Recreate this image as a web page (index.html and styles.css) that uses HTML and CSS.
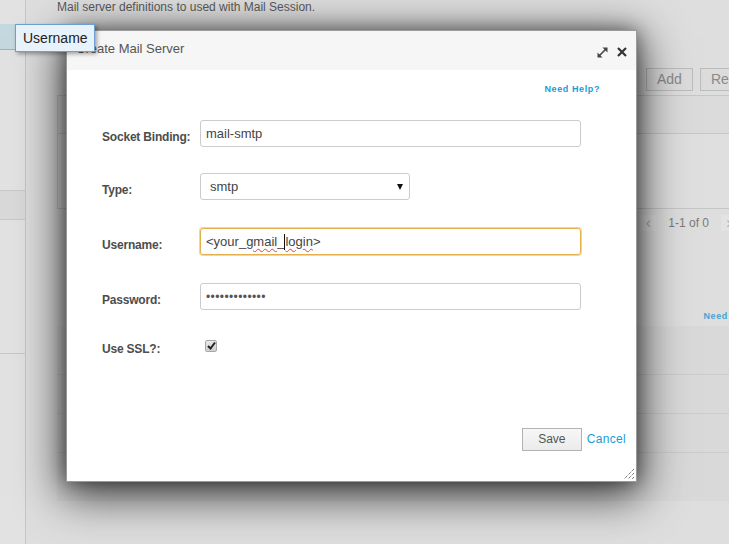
FILE: index.html
```html
<!DOCTYPE html>
<html>
<head>
<meta charset="utf-8">
<title>Create Mail Server</title>
<link rel="stylesheet" href="styles.css">
</head>
<body>
<div class="page">
  <aside class="nav">
    <div class="nav-top"></div>
    <div class="nav-item active"></div>
    <div class="nav-space1"></div>
    <div class="nav-band"></div>
    <div class="nav-space2"></div>
    <div class="nav-rest"></div>
  </aside>
  <main class="main">
    <p class="desc">Mail server definitions to used with Mail Session.</p>
    <div class="toolbar">
      <span class="bg-btn">Add</span>
      <span class="bg-btn">Remove</span>
    </div>
    <div class="table">
      <div class="thead"></div>
      <div class="tbody"></div>
    </div>
    <div class="pager">
      <span class="pg-btn">&#8249;</span>
      <span class="pg-text">1-1 of 0</span>
      <span class="pg-btn">&#8250;</span>
    </div>
    <div class="bg-help-row"><span class="bg-help">Need Help?</span></div>
    <div class="detail">
      <div class="drow first"></div>
      <div class="drow"></div>
      <div class="drow"></div>
      <div class="drow last"></div>
    </div>
  </main>
</div>

<div class="dialog">
  <div class="dlg-head">
    <span class="dlg-title">Create Mail Server</span>
    <span class="dlg-icons">
      <svg class="ico" width="11" height="11" viewBox="0 0 11 11">
        <line x1="2.5" y1="8.5" x2="8.5" y2="2.5" stroke="#444" stroke-width="1.6"/>
        <polygon points="5.5,0.5 10.5,0.5 10.5,5.5" fill="#444"/>
        <polygon points="0.5,5.5 0.5,10.5 5.5,10.5" fill="#444"/>
      </svg>
      <svg class="ico close" width="10" height="10" viewBox="0 0 10 10">
        <path d="M1 1 L9 9 M9 1 L1 9" stroke="#333" stroke-width="2.2" fill="none"/>
      </svg>
    </span>
  </div>
  <div class="dlg-body">
    <div class="help-row"><a class="help">Need Help?</a></div>
    <div class="form">
      <div class="row r1">
        <label class="lbl">Socket Binding:</label>
        <div class="field">mail-smtp</div>
      </div>
      <div class="row r2">
        <label class="lbl">Type:</label>
        <div class="field select"><span>smtp</span><span class="arrow"></span></div>
      </div>
      <div class="row r3">
        <label class="lbl">Username:</label>
        <div class="field focus">&lt;your_<span class="spell">gmail</span>_<span class="caret"></span><span class="spell">login</span>&gt;</div>
      </div>
      <div class="row r4">
        <label class="lbl">Password:</label>
        <div class="field pw">&#8226;&#8226;&#8226;&#8226;&#8226;&#8226;&#8226;&#8226;&#8226;&#8226;&#8226;&#8226;&#8226;</div>
      </div>
      <div class="row r5">
        <label class="lbl">Use SSL?:</label>
        <span class="check">
          <svg width="9" height="9" viewBox="0 0 9 9"><path d="M1 5 L3.5 7.5 L8 1.5" stroke="#222" stroke-width="2" fill="none"/></svg>
        </span>
      </div>
    </div>
    <div class="footer">
      <span class="save">Save</span>
      <a class="cancel">Cancel</a>
    </div>
  </div>
  <svg class="grip" width="12" height="12" viewBox="0 0 12 12">
    <path d="M11 1 L1 11 M11 5 L5 11 M11 9 L9 11" stroke="#444" stroke-width="1" stroke-dasharray="1 1" fill="none"/>
  </svg>
</div>

<div class="tooltip">Username</div>
</body>
</html>
```
FILE: styles.css
```css
html, body {
  margin: 0;
  padding: 0;
}
body {
  width: 729px;
  height: 544px;
  overflow: hidden;
  background: #dedede;
  font-family: "Liberation Sans", Arial, sans-serif;
  position: relative;
}
.page {
  display: flex;
  height: 544px;
}
.nav {
  width: 25px;
  flex: none;
  border-right: 1px solid #c6c6c6;
  background: #e2e2e2;
  display: flex;
  flex-direction: column;
}
.nav-top { height: 24px; }
.nav-item.active {
  height: 25px;
  background: #c4d8df;
  border-bottom: 1px solid #8fb7cf;
}
.nav-space1 {
  height: 140px;
  border-bottom: 1px solid #c8c8c8;
}
.nav-band {
  height: 28px;
  background: #d9d9d9;
  border-bottom: 1px solid #c8c8c8;
}
.nav-space2 {
  height: 133px;
  border-bottom: 1px solid #c8c8c8;
}
.nav-rest { flex: 1; }

.main {
  flex: 1;
  padding-left: 31px;
  display: flex;
  flex-direction: column;
  min-width: 0;
}
.desc {
  margin: 0;
  font-size: 12px;
  line-height: 14px;
  color: #5a5a5a;
  white-space: nowrap;
}
.toolbar {
  margin-top: 54px;
  height: 23px;
  display: flex;
  gap: 7px;
  padding-left: 589px;
  white-space: nowrap;
}
.bg-btn {
  flex: none;
  height: 21px;
  line-height: 21px;
  padding: 0 10px;
  border: 1px solid #bcbcbc;
  background: #dcdcdc;
  color: #8a8a8a;
  font-size: 14px;
}
.table {
  margin-top: 4px;
  border: 1px solid #c6c6c6;
  border-right: none;
  margin-right: -10px;
}
.thead {
  height: 37px;
  background: #dbdbdb;
  border-bottom: 1px solid #c6c6c6;
}
.tbody {
  height: 74px;
  background: #dfdfdf;
}
.pager {
  height: 27px;
  display: flex;
  align-items: center;
  justify-content: flex-end;
  gap: 12px;
  margin-right: -8px;
  font-size: 12px;
  color: #7a7a7a;
}
.pg-btn {
  width: 16px;
  height: 16px;
  line-height: 15px;
  text-align: center;
  background: #e3e3e3;
  color: #b0b0b0;
  font-size: 16px;
}
.bg-help-row {
  height: 90px;
  display: flex;
  align-items: flex-end;
  justify-content: flex-end;
  margin-right: -30px;
}
.bg-help {
  font-size: 9px;
  font-weight: bold;
  letter-spacing: 0.6px;
  color: #4aa3cf;
  padding-bottom: 5px;
  white-space: nowrap;
}
.detail {
  height: 175px;
  background: #d9d9d9;
}
.drow {
  height: 48px;
  border-bottom: 1px solid #cdcdcd;
}
.drow + .drow { height: 38px; }
.drow.last { border-bottom: none; }

/* dialog */
.dialog {
  position: absolute;
  left: 66px;
  top: 30px;
  width: 571px;
  height: 452px;
  box-sizing: border-box;
  border: 1px solid #9a9a9a;
  background: #fff;
  display: flex;
  flex-direction: column;
  box-shadow: 0 10px 42px 4px rgba(0, 0, 0, 0.72), 0 0 16px rgba(0, 0, 0, 0.4);
}
.dlg-head {
  height: 39px;
  flex: none;
  background: #f6f6f6;
  display: flex;
  align-items: center;
  justify-content: space-between;
  padding: 0 9px 0 9px;
}
.dlg-title {
  font-size: 13px;
  color: #555;
  margin-top: -4px;
}
.dlg-icons {
  display: flex;
  align-items: center;
  gap: 9px;
  padding-top: 3px;
}
.ico { display: block; }
.dlg-body {
  flex: 1;
  display: flex;
  flex-direction: column;
  padding: 14px 10px 30px 35px;
}
.help-row {
  display: flex;
  justify-content: flex-end;
  padding-right: 26px;
}
.help {
  font-size: 9px;
  font-weight: bold;
  letter-spacing: 0.6px;
  line-height: 11px;
  color: #1a9bd7;
}
.form {
  margin-top: 25px;
  display: flex;
  flex-direction: column;
}
.row {
  display: flex;
  align-items: center;
}
.r2 { margin-top: 26px; }
.r3 { margin-top: 28px; }
.r4 { margin-top: 28px; }
.r5 { margin-top: 25px; }
.lbl {
  width: 98px;
  flex: none;
  font-size: 12px;
  font-weight: bold;
  letter-spacing: -0.2px;
  color: #4d4d4d;
  padding-top: 7px;
  white-space: nowrap;
}
.field {
  width: 381px;
  height: 27px;
  box-sizing: border-box;
  border: 1px solid #cbcbcb;
  border-radius: 3px;
  padding: 0 0 0 5px;
  font-size: 13px;
  line-height: 24px;
  color: #444;
  white-space: nowrap;
  display: flex;
  align-items: center;
}
.field.select {
  width: 210px;
  padding: 0 6px 0 9px;
  justify-content: space-between;
  line-height: 25px;
}
.arrow {
  width: 0;
  height: 0;
  border-left: 3.5px solid transparent;
  border-right: 3.5px solid transparent;
  border-top: 6px solid #111;
}
.field.focus {
  border: 1px solid #e3b04b;
  box-shadow: 0 0 0 1px rgba(232, 185, 90, 0.6);
}
.spell {
  text-decoration: underline wavy #e04040;
  text-decoration-thickness: 1px;
  text-underline-offset: 2px;
}
.caret {
  display: inline-block;
  width: 1px;
  height: 16px;
  background: #111;
}
.field.pw {
  font-size: 12px;
  letter-spacing: 0.4px;
  color: #555;
}
.check {
  margin-left: 5px;
  width: 10px;
  height: 10px;
  border: 1px solid #a8a8a8;
  border-radius: 2px;
  background: linear-gradient(#e8e8e8, #cfcfcf);
  display: flex;
  align-items: center;
  justify-content: center;
}
.footer {
  margin-top: auto;
  display: flex;
  justify-content: flex-end;
  align-items: center;
  gap: 5px;
}
.save {
  width: 58px;
  height: 21px;
  border: 1px solid #b3b3b3;
  background: linear-gradient(#f7f7f7, #ebebeb);
  font-size: 12px;
  color: #555;
  text-align: center;
  line-height: 21px;
}
.cancel {
  font-size: 12px;
  letter-spacing: 0.3px;
  color: #1a9bd7;
  margin-top: -2px;
}
.grip {
  position: absolute;
  right: 1px;
  bottom: 1px;
}

.tooltip {
  position: absolute;
  left: 15px;
  top: 24px;
  width: 80px;
  height: 28px;
  box-sizing: border-box;
  border: 1px solid #6f9fcf;
  background: #e7f2fb;
  color: #222;
  font-size: 14px;
  line-height: 26px;
  padding-left: 7px;
  box-shadow: 2px 2px 4px rgba(0, 0, 0, 0.35);
}
```
